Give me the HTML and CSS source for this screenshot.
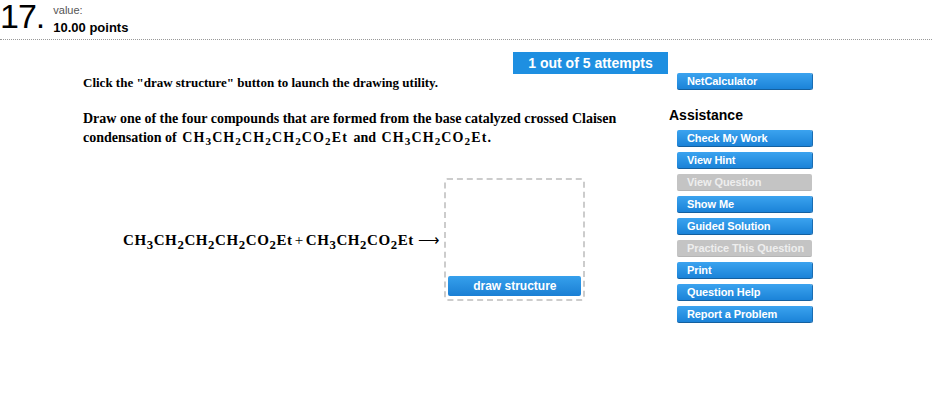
FILE: index.html
```html
<!DOCTYPE html>
<html>
<head>
    <meta charset="UTF-8">
    <title>Question 17</title>
    <link rel="stylesheet" href="styles.css">
</head>
<body>
    <div class="header">
        <div class="qnum">17.</div>
        <div class="value">
            <div class="value-label">value:</div>
            <div class="value-points">10.00 points</div>
        </div>
    </div>

    <div class="layout">
        <div class="main">
            <div class="attempts">1 out of 5 attempts</div>
            <p class="prompt">Click the "draw structure" button to launch the drawing utility.</p>
            <p class="prompt prompt-long">Draw one of the four compounds that are formed from the base catalyzed crossed Claisen<br>
                condensation of <span class="formula">CH<sub>3</sub>CH<sub>2</sub>CH<sub>2</sub>CH<sub>2</sub>CO<sub>2</sub>Et</span> and <span class="formula">CH<sub>3</sub>CH<sub>2</sub>CO<sub>2</sub>Et.</span></p>

            <div class="reaction">
                <div class="equation">CH<sub>3</sub>CH<sub>2</sub>CH<sub>2</sub>CH<sub>2</sub>CO<sub>2</sub>Et<span class="plus">+</span>CH<sub>3</sub>CH<sub>2</sub>CO<sub>2</sub>Et <span class="arrow">&#x27F6;</span></div>
                <div class="drawbox">
                    <div class="draw-btn">draw structure</div>
                </div>
            </div>
        </div>

        <div class="side">
            <div class="btn">NetCalculator</div>
            <h3 class="side-title">Assistance</h3>
            <div class="btn-list">
                <div class="btn">Check My Work</div>
                <div class="btn">View Hint</div>
                <div class="btn disabled">View Question</div>
                <div class="btn">Show Me</div>
                <div class="btn">Guided Solution</div>
                <div class="btn disabled">Practice This Question</div>
                <div class="btn">Print</div>
                <div class="btn">Question Help</div>
                <div class="btn">Report a Problem</div>
            </div>
        </div>
    </div>
</body>
</html>
```

FILE: styles.css
```css
html {
    font-family: "Liberation Sans", Arial, sans-serif;
    box-sizing: border-box;
}

*,
*:before,
*:after {
    box-sizing: inherit;
}

body {
    margin: 0;
    background: white;
    color: black;
}

.header {
    display: flex;
    align-items: flex-start;
    height: 40px;
    border-bottom: 1px dotted #999;
}

.qnum {
    font-size: 34px;
    line-height: 32px;
    letter-spacing: -1px;
}

.value {
    margin-left: 9px;
    padding-top: 4px;
}

.value-label {
    font-size: 11px;
    color: #555;
    line-height: 12px;
}

.value-points {
    font-size: 13px;
    font-weight: bold;
    line-height: 15px;
    margin-top: 4px;
}

.layout {
    display: flex;
}

.main {
    width: 668px;
    padding-left: 83px;
    display: flex;
    flex-direction: column;
}

.attempts {
    align-self: flex-end;
    margin-top: 12px;
    width: 155px;
    height: 22px;
    line-height: 22px;
    background: #1e8fe1;
    color: white;
    font-weight: bold;
    font-size: 14px;
    text-align: center;
}

.prompt {
    font-family: "Liberation Serif", "Times New Roman", serif;
    font-weight: bold;
    font-size: 13px;
    line-height: 19px;
    margin: 0;
    white-space: nowrap;
}

.prompt:first-of-type {
    margin-top: -1px;
}

.prompt-long {
    margin-top: 17px;
    font-size: 14px;
}

.prompt sub {
    font-size: 80%;
    line-height: 0;
    vertical-align: -3px;
}

.formula {
    letter-spacing: 1.1px;
    margin: 0 2px;
}

.reaction {
    display: flex;
    align-items: center;
    margin-top: 27px;
    margin-left: 40px;
}

.equation {
    font-family: "Liberation Serif", "Times New Roman", serif;
    font-weight: bold;
    font-size: 15px;
    letter-spacing: 0.6px;
    white-space: nowrap;
    margin-top: 4px;
}

.equation sub {
    font-size: 85%;
    line-height: 0;
    vertical-align: -4px;
}

.plus {
    font-weight: normal;
    margin: 0 2px;
}

.arrow {
    font-weight: normal;
    letter-spacing: 0;
}

.drawbox {
    margin-left: 4px;
    margin-top: 4px;
    width: 141px;
    height: 123px;
    border: 2px dashed #ccc;
    border-radius: 3px;
    display: flex;
    align-items: flex-end;
    padding: 0 2px 3px 2px;
}

.draw-btn {
    width: 100%;
    height: 20px;
    line-height: 20px;
    text-align: center;
    color: white;
    font-weight: bold;
    font-size: 12px;
    background: linear-gradient(#36a0ec, #1a7fd4);
    border-radius: 2px;
}

.side {
    margin-left: 9px;
    width: 135px;
    padding-top: 33px;
}

.side-title {
    font-size: 14px;
    margin: 0;
    margin-left: -8px;
    margin-top: 16px;
    line-height: 18px;
}

.btn-list {
    display: flex;
    flex-direction: column;
    gap: 5px;
    margin-top: 6px;
}

.btn {
    height: 17px;
    line-height: 16px;
    padding-left: 10px;
    color: white;
    font-weight: bold;
    font-size: 11px;
    letter-spacing: -0.1px;
    white-space: nowrap;
    overflow: hidden;
    background: linear-gradient(#3ba3ef, #1b83d8);
    border-radius: 2px;
    border-bottom: 1px solid #14609f;
    box-shadow: 1px 0 0 #1a6db3;
}

.btn.disabled {
    background: #c4c4c4;
    border-bottom-color: #b5b5b5;
    box-shadow: none;
    color: #eee;
}
```
